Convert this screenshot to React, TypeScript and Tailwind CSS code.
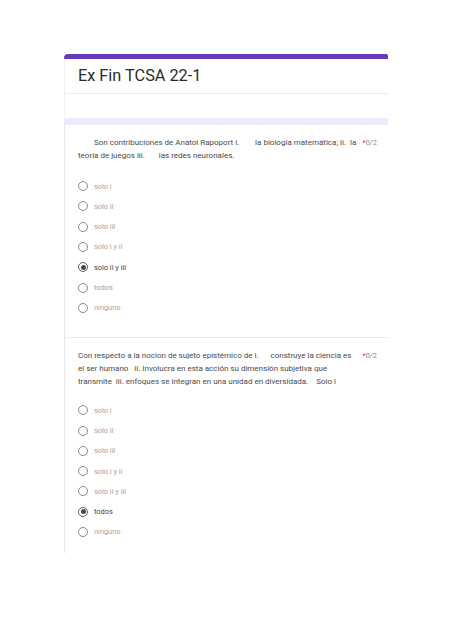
import React from "react";

type Opt = { label: string; selected?: boolean };

const q1Options: Opt[] = [
  { label: "solo i" },
  { label: "solo ii" },
  { label: "solo iii" },
  { label: "solo i y ii" },
  { label: "solo ii y iii", selected: true },
  { label: "todos" },
  { label: "ninguno" },
];

const q2Options: Opt[] = [
  { label: "solo i" },
  { label: "solo ii" },
  { label: "solo iii" },
  { label: "solo i y ii" },
  { label: "solo ii y iii" },
  { label: "todos", selected: true },
  { label: "ninguno" },
];

function Radio({ selected }: { selected?: boolean }) {
  return (
    <span
      className={
        "flex items-center justify-center w-[10px] h-[10px] rounded-full border " +
        (selected ? "border-[#5f5f5f]" : "border-[#8a8a8a]")
      }
    >
      {selected && <span className="w-[5px] h-[5px] rounded-full bg-[#4a4a4a]" />}
    </span>
  );
}

function Options({ items }: { items: Opt[] }) {
  return (
    <div className="flex flex-col">
      {items.map((o) => (
        <div key={o.label} className="flex items-center gap-[6px] h-[20.3px] pl-[13px]">
          <Radio selected={o.selected} />
          <span
            className={
              "text-[7.4px] " + (o.selected ? "text-[#444444]" : "text-[#a3a3a3]")
            }
          >
            {o.label}
          </span>
        </div>
      ))}
    </div>
  );
}

function Points() {
  return (
    <span className="text-[7.4px] text-[#8a8a8a] whitespace-nowrap">
      <span className="text-[#d93025]">*</span>0/2
    </span>
  );
}

export default function App() {
  return (
    <div
      className="w-[453px] h-[640px] bg-white pt-[54px] pl-[64px]"
      style={{ fontFamily: "Roboto, 'Liberation Sans', sans-serif" }}
    >
      <div className="w-[324px]">
        {/* Header */}
        <div className="h-[5px] bg-[#673ab7] rounded-tl-[4px] rounded-tr-[2px]" />
        <div className="h-[35px] flex items-center px-[13px] border-b border-[#ececec] border-l border-l-[#f0f0f0]">
          <h1 className="text-[16.3px] text-[#2a2a2a] leading-none">Ex Fin TCSA 22-1</h1>
        </div>
        <div className="h-[24px] border-l border-[#f0f0f0]" />
        <div className="h-[7px] bg-[#ecebfa]" />

        {/* Question 1 */}
        <div className="border-l border-[#e6e6e6] pt-[11px] pb-[19px] border-b border-b-[#ececec]">
          <div className="flex justify-between pl-[13px] pr-[11px] text-[8px] leading-[13px] text-[#4a4a4a]">
            <div className="whitespace-pre">
              <div>
                <span className="inline-block w-[16px]" />
                {"Son contribuciones de Anatol Rapoport i.        la biología matemática; ii.  la"}
              </div>
              <div>{"teoría de juegos iii.       las redes neuronales."}</div>
            </div>
            <Points />
          </div>
          <div className="mt-[14px]">
            <Options items={q1Options} />
          </div>
        </div>

        {/* Question 2 */}
        <div className="border-l border-[#e6e6e6] pt-[11px] pb-[11px]">
          <div className="flex justify-between pl-[13px] pr-[11px] text-[8px] leading-[13px] text-[#4a4a4a]">
            <div className="whitespace-pre">
              <div>{"Con respecto a la nocion de sujeto epistémico de i.      construye la ciencia es"}</div>
              <div>{"el ser humano   ii. Involucra en esta acción su dimensión subjetiva que"}</div>
              <div>{"transmite  iii. enfoques se integran en una unidad en diversidada.    Solo i"}</div>
            </div>
            <Points />
          </div>
          <div className="mt-[12px]">
            <Options items={q2Options} />
          </div>
        </div>
      </div>
    </div>
  );
}
